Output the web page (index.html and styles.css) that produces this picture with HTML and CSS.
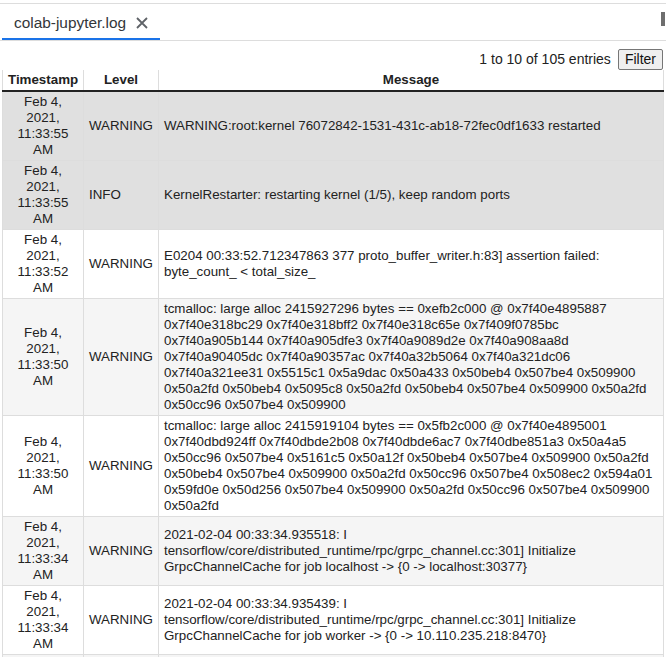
FILE: index.html
```html
<!DOCTYPE html>
<html>
<head>
<meta charset="utf-8">
<link rel="stylesheet" href="styles.css">
</head>
<body>
<div class="tabbar">
  <div class="tab">
    <span class="tab-title">colab-jupyter.log</span>
    <svg class="tab-close" width="12" height="12" viewBox="0 0 12 12"><path d="M1 1L11 11M11 1L1 11" stroke="#5f6368" stroke-width="1.8" fill="none"/></svg>
  </div>
  <div class="tab-spacer"></div>
  <div class="bar-thumb"></div>
</div>
<div class="content">
  <div class="controls">
    <span class="count">1 to 10 of 105 entries</span>
    <button class="filter">Filter</button>
  </div>
  <table class="log">
    <colgroup><col class="c-ts"><col class="c-lv"><col class="c-msg"></colgroup>
    <thead>
      <tr><th>Timestamp</th><th>Level</th><th>Message</th></tr>
    </thead>
    <tbody>
      <tr class="sel"><td class="ts">Feb 4, 2021, 11:33:55 AM</td><td>WARNING</td><td>WARNING:root:kernel 76072842-1531-431c-ab18-72fec0df1633 restarted</td></tr>
      <tr class="sel"><td class="ts">Feb 4, 2021, 11:33:55 AM</td><td>INFO</td><td>KernelRestarter: restarting kernel (1/5), keep random ports</td></tr>
      <tr><td class="ts">Feb 4, 2021, 11:33:52 AM</td><td>WARNING</td><td>E0204 00:33:52.712347863 377 proto_buffer_writer.h:83] assertion failed: byte_count_ &lt; total_size_</td></tr>
      <tr><td class="ts">Feb 4, 2021, 11:33:50 AM</td><td>WARNING</td><td>tcmalloc: large alloc 2415927296 bytes == 0xefb2c000 @ 0x7f40e4895887 0x7f40e318bc29 0x7f40e318bff2 0x7f40e318c65e 0x7f409f0785bc 0x7f40a905b144 0x7f40a905dfe3 0x7f40a9089d2e 0x7f40a908aa8d 0x7f40a90405dc 0x7f40a90357ac 0x7f40a32b5064 0x7f40a321dc06 0x7f40a321ee31 0x5515c1 0x5a9dac 0x50a433 0x50beb4 0x507be4 0x509900 0x50a2fd 0x50beb4 0x5095c8 0x50a2fd 0x50beb4 0x507be4 0x509900 0x50a2fd 0x50cc96 0x507be4 0x509900</td></tr>
      <tr><td class="ts">Feb 4, 2021, 11:33:50 AM</td><td>WARNING</td><td>tcmalloc: large alloc 2415919104 bytes == 0x5fb2c000 @ 0x7f40e4895001 0x7f40dbd924ff 0x7f40dbde2b08 0x7f40dbde6ac7 0x7f40dbe851a3 0x50a4a5 0x50cc96 0x507be4 0x5161c5 0x50a12f 0x50beb4 0x507be4 0x509900 0x50a2fd 0x50beb4 0x507be4 0x509900 0x50a2fd 0x50cc96 0x507be4 0x508ec2 0x594a01 0x59fd0e 0x50d256 0x507be4 0x509900 0x50a2fd 0x50cc96 0x507be4 0x509900 0x50a2fd</td></tr>
      <tr><td class="ts">Feb 4, 2021, 11:33:34 AM</td><td>WARNING</td><td>2021-02-04 00:33:34.935518: I tensorflow/core/distributed_runtime/rpc/grpc_channel.cc:301] Initialize GrpcChannelCache for job localhost -&gt; {0 -&gt; localhost:30377}</td></tr>
      <tr><td class="ts">Feb 4, 2021, 11:33:34 AM</td><td>WARNING</td><td>2021-02-04 00:33:34.935439: I tensorflow/core/distributed_runtime/rpc/grpc_channel.cc:301] Initialize GrpcChannelCache for job worker -&gt; {0 -&gt; 10.110.235.218:8470}</td></tr>
      <tr class="tail"><td class="ts"></td><td></td><td></td></tr>
    </tbody>
  </table>
</div>
</body>
</html>
```
FILE: styles.css
```css
html, body {
  margin: 0;
  padding: 0;
  background: #ffffff;
  overflow: hidden;
}
body {
  font-family: "Liberation Sans", Arial, sans-serif;
  color: #222222;
}
.tabbar {
  margin-top: 3px;
  border-top: 1px solid #dddddd;
  border-bottom: 1px solid #dddddd;
  height: 36px;
  display: flex;
  align-items: flex-start;
}
.tab {
  margin-left: 2px;
  height: 30px;
  padding: 4px 12px 0 12px;
  border-bottom: 2px solid #1a73e8;
  display: flex;
  align-items: center;
  gap: 10px;
}
.tab-title {
  font-size: 15.4px;
  color: #333639;
}
.tab-close {
  display: block;
}
.tab-spacer {
  flex: 1;
}
.bar-thumb {
  width: 4px;
  height: 14px;
  margin-top: 8px;
  margin-right: 1px;
  background: #6e6e6e;
}
.content {
  padding: 0 2px;
}
.controls {
  display: flex;
  justify-content: flex-end;
  align-items: baseline;
  gap: 7px;
  padding-top: 8px;
  padding-right: 1px;
}
.count {
  font-size: 14px;
  color: #222222;
}
.filter {
  font-family: "Liberation Sans", Arial, sans-serif;
  font-size: 14px;
  color: #111111;
  background: #efefef;
  border: 1px solid #767676;
  border-radius: 2px;
  padding: 1px 6px;
  height: 21px;
  line-height: 17px;
}
.log {
  width: 662px;
  border-collapse: collapse;
  table-layout: fixed;
  font-size: 13.333px;
  line-height: 16px;
}
.c-ts { width: 81px; }
.c-lv { width: 75px; }
.log th {
  font-weight: bold;
  text-align: center;
  padding: 2px 5px 2px 5px;
  border-left: 1px solid #dddddd;
  border-right: 1px solid #dddddd;
  border-bottom: 2px solid #222222;
  background: #ffffff;
}
.log td {
  padding: 2px 5px;
  border: 1px solid #dddddd;
  vertical-align: middle;
  text-align: left;
  word-wrap: break-word;
}
.log td.ts {
  text-align: center;
}
.log tr.tail td {
  height: 64px;
}
.log tbody tr:nth-child(even) td {
  background: #f5f5f5;
}
.log tbody tr:nth-child(odd) td {
  background: #ffffff;
}
.log tbody tr.sel td {
  background: #e0e0e0;
}
```
